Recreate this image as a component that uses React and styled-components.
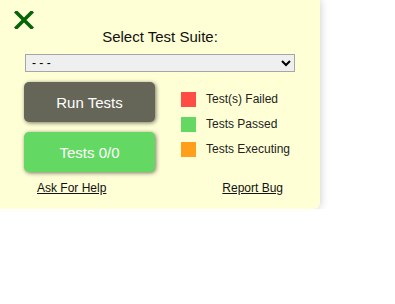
import React from "react";
import styled, { createGlobalStyle } from "styled-components";

const Global = createGlobalStyle`
  html, body { margin: 0; padding: 0; background: #ffffff; }
  body { font-family: "Liberation Sans", Arial, sans-serif; }
`;

const Panel = styled.div`
  width: 320px;
  height: 209px;
  box-sizing: border-box;
  background: #ffffd6;
  border-bottom-right-radius: 6px;
  box-shadow: 0 0 10px rgba(0, 0, 0, 0.22);
  display: flex;
  flex-direction: column;
`;

const CloseIcon = styled.svg`
  display: block;
  width: 20px;
  height: 18px;
  margin: 11px 0 0 14px;
  cursor: pointer;
`;

const Title = styled.div`
  font-size: 15px;
  line-height: 17px;
  color: #111;
  text-align: center;
  margin-top: -1px;
`;

const Select = styled.select`
  display: block;
  box-sizing: border-box;
  width: 270px;
  height: 18px;
  margin: 9px 0 0 25px;
  padding: 0 2px;
  font-family: "Liberation Sans", Arial, sans-serif;
  font-size: 12px;
  color: #000;
  background: #efefef;
  border: 1px solid #a6a6a6;
  border-radius: 0;
`;

const Body = styled.div`
  display: flex;
  gap: 26px;
  margin: 10px 0 0 24px;
`;

const Buttons = styled.div`
  display: flex;
  flex-direction: column;
  gap: 10px;
`;

const Button = styled.button`
  width: 131px;
  height: 40px;
  padding: 1px 0 0;
  border: none;
  border-radius: 5px;
  background: ${(p) => p.$bg};
  color: #ffffff;
  font-family: "Liberation Sans", Arial, sans-serif;
  font-size: 15px;
  box-shadow: 1px 1px 4px rgba(0, 0, 0, 0.55);
  cursor: pointer;
`;

const Legend = styled.div`
  display: flex;
  flex-direction: column;
  gap: 10px;
  padding-top: 10px;
`;

const LegendRow = styled.div`
  display: flex;
  align-items: center;
  gap: 10px;
  font-size: 12px;
  line-height: 15px;
  color: #222;
`;

const Swatch = styled.span`
  width: 15px;
  height: 15px;
  background: ${(p) => p.$color};
`;

const Links = styled.div`
  display: flex;
  justify-content: space-between;
  padding: 0 37px;
  margin-top: 9px;
`;

const Link = styled.a`
  font-size: 12px;
  line-height: 14px;
  color: #111;
  text-decoration: underline;
  cursor: pointer;
`;

export default function App() {
  return (
    <>
      <Global />
      <Panel>
        <CloseIcon viewBox="0 0 20 18">
          <path d="M2.5 1.5 L17.5 16.5 M17.5 1.5 L2.5 16.5" stroke="#086408" strokeWidth="3.6" strokeLinecap="square" />
        </CloseIcon>
        <Title>Select Test Suite:</Title>
        <Select defaultValue="none">
          <option value="none">- - -</option>
        </Select>
        <Body>
          <Buttons>
            <Button $bg="#666658">Run Tests</Button>
            <Button $bg="#63d963">Tests 0/0</Button>
          </Buttons>
          <Legend>
            <LegendRow><Swatch $color="#ff4d45" />Test(s) Failed</LegendRow>
            <LegendRow><Swatch $color="#63d963" />Tests Passed</LegendRow>
            <LegendRow><Swatch $color="#ff9f1c" />Tests Executing</LegendRow>
          </Legend>
        </Body>
        <Links>
          <Link>Ask For Help</Link>
          <Link>Report Bug</Link>
        </Links>
      </Panel>
    </>
  );
}
